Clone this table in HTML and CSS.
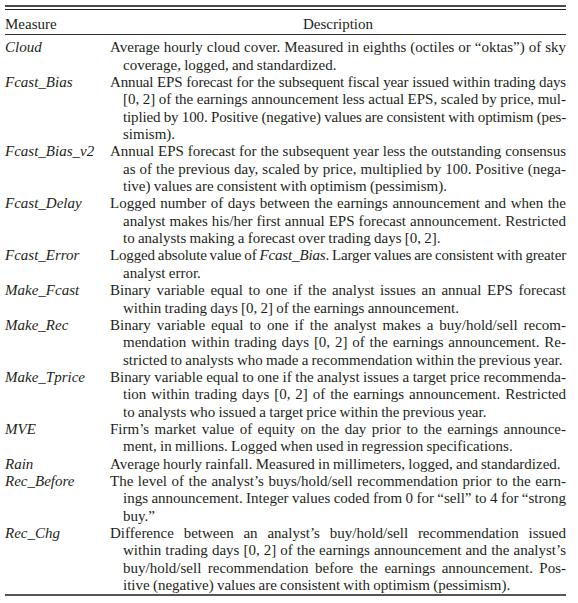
FILE: index.html
```html
<!DOCTYPE html>
<html>
<head>
<meta charset="utf-8">
<link rel="stylesheet" href="styles.css">
</head>
<body>
<div class="table">
  <div class="rule-top"></div>
  <div class="head">
    <div class="c1">Measure</div>
    <div class="c2 center">Description</div>
  </div>
  <div class="tbody">
    <div class="row">
      <div class="c1">Cloud</div>
      <div class="c2">
        <span class="ln">Average hourly cloud cover. Measured in eighths (octiles or “oktas”) of sky</span>
        <span class="ln cont last">coverage, logged, and standardized.</span>
      </div>
    </div>
    <div class="row">
      <div class="c1">Fcast_Bias</div>
      <div class="c2">
        <span class="ln tight">Annual EPS forecast for the subsequent fiscal year issued within trading days</span>
        <span class="ln cont">[0, 2] of the earnings announcement less actual EPS, scaled by price, mul-</span>
        <span class="ln cont tight">tiplied by 100. Positive (negative) values are consistent with optimism (pes-</span>
        <span class="ln cont last">simism).</span>
      </div>
    </div>
    <div class="row">
      <div class="c1">Fcast_Bias_v2</div>
      <div class="c2">
        <span class="ln">Annual EPS forecast for the subsequent year less the outstanding consensus</span>
        <span class="ln cont">as of the previous day, scaled by price, multiplied by 100. Positive (nega-</span>
        <span class="ln cont last">tive) values are consistent with optimism (pessimism).</span>
      </div>
    </div>
    <div class="row">
      <div class="c1">Fcast_Delay</div>
      <div class="c2">
        <span class="ln">Logged number of days between the earnings announcement and when the</span>
        <span class="ln cont">analyst makes his/her first annual EPS forecast announcement. Restricted</span>
        <span class="ln cont last">to analysts making a forecast over trading days [0, 2].</span>
      </div>
    </div>
    <div class="row">
      <div class="c1">Fcast_Error</div>
      <div class="c2">
        <span class="ln tight">Logged absolute value of <i>Fcast_Bias</i>. Larger values are consistent with greater</span>
        <span class="ln cont last">analyst error.</span>
      </div>
    </div>
    <div class="row">
      <div class="c1">Make_Fcast</div>
      <div class="c2">
        <span class="ln">Binary variable equal to one if the analyst issues an annual EPS forecast</span>
        <span class="ln cont last">within trading days [0, 2] of the earnings announcement.</span>
      </div>
    </div>
    <div class="row">
      <div class="c1">Make_Rec</div>
      <div class="c2">
        <span class="ln">Binary variable equal to one if the analyst makes a buy/hold/sell recom-</span>
        <span class="ln cont">mendation within trading days [0, 2] of the earnings announcement. Re-</span>
        <span class="ln cont last">stricted to analysts who made a recommendation within the previous year.</span>
      </div>
    </div>
    <div class="row">
      <div class="c1">Make_Tprice</div>
      <div class="c2">
        <span class="ln">Binary variable equal to one if the analyst issues a target price recommenda-</span>
        <span class="ln cont">tion within trading days [0, 2] of the earnings announcement. Restricted</span>
        <span class="ln cont last">to analysts who issued a target price within the previous year.</span>
      </div>
    </div>
    <div class="row">
      <div class="c1">MVE</div>
      <div class="c2">
        <span class="ln">Firm’s market value of equity on the day prior to the earnings announce-</span>
        <span class="ln cont last">ment, in millions. Logged when used in regression specifications.</span>
      </div>
    </div>
    <div class="row">
      <div class="c1">Rain</div>
      <div class="c2">
        <span class="ln last">Average hourly rainfall. Measured in millimeters, logged, and standardized.</span>
      </div>
    </div>
    <div class="row">
      <div class="c1">Rec_Before</div>
      <div class="c2">
        <span class="ln">The level of the analyst’s buys/hold/sell recommendation prior to the earn-</span>
        <span class="ln cont">ings announcement. Integer values coded from 0 for “sell” to 4 for “strong</span>
        <span class="ln cont last">buy.”</span>
      </div>
    </div>
    <div class="row">
      <div class="c1">Rec_Chg</div>
      <div class="c2">
        <span class="ln">Difference between an analyst’s buy/hold/sell recommendation issued</span>
        <span class="ln cont">within trading days [0, 2] of the earnings announcement and the analyst’s</span>
        <span class="ln cont">buy/hold/sell recommendation before the earnings announcement. Pos-</span>
        <span class="ln cont last">itive (negative) values are consistent with optimism (pessimism).</span>
      </div>
    </div>
  </div>
</div>
</body>
</html>
```
FILE: styles.css
```css
html, body {
  margin: 0;
  padding: 0;
  background: #ffffff;
}
body {
  font-family: "Liberation Serif", "Times New Roman", serif;
  font-size: 15px;
  line-height: 17.35px;
  color: #231f20;
}
.table {
  margin: 5px 12px 0 5px;
  width: 561px;
}
.rule-top {
  border-top: 2px solid #4a4a4a;
  border-bottom: 1px solid #231f20;
  height: 2px;
}
.head {
  display: grid;
  grid-template-columns: 105px 1fr;
  padding-top: 6px;
  padding-bottom: 1px;
  border-bottom: 1px solid #333;
}
.center {
  text-align: center;
}
.tbody {
  padding-top: 4px;
  padding-bottom: 0;
  border-bottom: 2px solid #555;
}
.row {
  display: grid;
  grid-template-columns: 105px 1fr;
}
.row .c1 {
  font-style: italic;
}
.ln {
  display: block;
  text-align: justify;
  text-align-last: justify;
  white-space: nowrap;
  word-spacing: -0.5px;
}
.ln.tight {
  word-spacing: -2.5px;
  letter-spacing: -0.15px;
}
.ln.cont {
  padding-left: 13px;
}
.ln.last {
  text-align-last: left;
}
```
